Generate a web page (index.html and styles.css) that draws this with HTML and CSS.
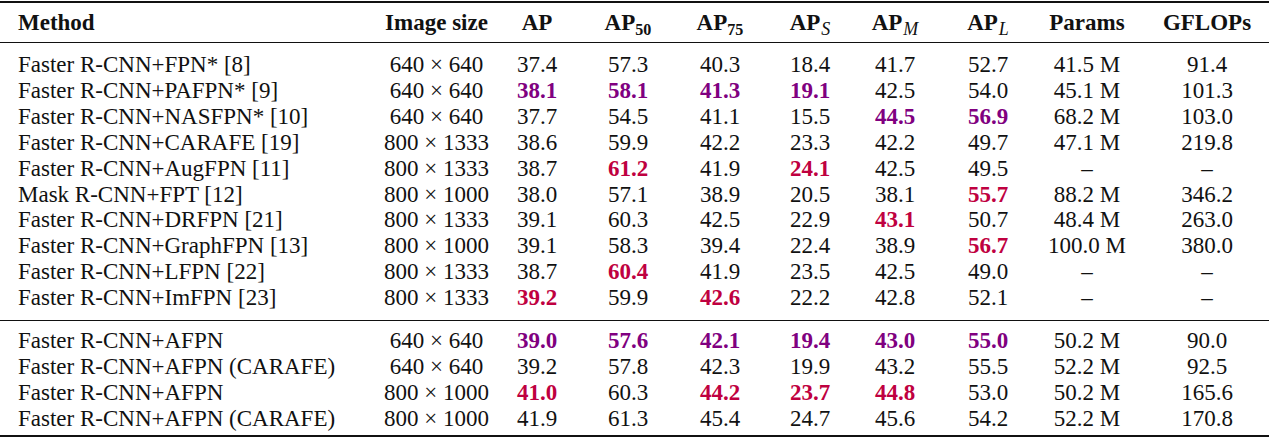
FILE: index.html
```html
<!DOCTYPE html>
<html lang="en">
<head>
<meta charset="utf-8">
<title>Comparison table</title>
<link rel="stylesheet" href="styles.css">
</head>
<body>
<div class="page">
<table class="results">
  <colgroup>
    <col class="c1"><col class="c2"><col class="c3"><col class="c4"><col class="c5">
    <col class="c6"><col class="c7"><col class="c8"><col class="c9"><col class="c10">
  </colgroup>
  <thead>
    <tr>
      <th class="method">Method</th>
      <th class="k2">Image size</th>
      <th class="k3">AP</th>
      <th class="k4">AP<span class="sub">50</span></th>
      <th class="k5">AP<span class="sub">75</span></th>
      <th class="k6">AP<span class="sub it">S</span></th>
      <th class="k7">AP<span class="sub it">M</span></th>
      <th class="k8">AP<span class="sub it">L</span></th>
      <th class="k9">Params</th>
      <th class="k10">GFLOPs</th>
    </tr>
  </thead>
  <tbody class="group-a">
    <tr class="first"><td class="method">Faster R-CNN+FPN* [8]</td><td class="k2">640 × 640</td><td class="k3">37.4</td><td class="k4">57.3</td><td class="k5">40.3</td><td class="k6">18.4</td><td class="k7">41.7</td><td class="k8">52.7</td><td class="k9">41.5 M</td><td class="k10">91.4</td></tr>
    <tr><td class="method">Faster R-CNN+PAFPN* [9]</td><td class="k2">640 × 640</td><td class="k3 pu">38.1</td><td class="k4 pu">58.1</td><td class="k5 pu">41.3</td><td class="k6 pu">19.1</td><td class="k7">42.5</td><td class="k8">54.0</td><td class="k9">45.1 M</td><td class="k10">101.3</td></tr>
    <tr><td class="method">Faster R-CNN+NASFPN* [10]</td><td class="k2">640 × 640</td><td class="k3">37.7</td><td class="k4">54.5</td><td class="k5">41.1</td><td class="k6">15.5</td><td class="k7 pu">44.5</td><td class="k8 pu">56.9</td><td class="k9">68.2 M</td><td class="k10">103.0</td></tr>
    <tr><td class="method">Faster R-CNN+CARAFE [19]</td><td class="k2">800 × 1333</td><td class="k3">38.6</td><td class="k4">59.9</td><td class="k5">42.2</td><td class="k6">23.3</td><td class="k7">42.2</td><td class="k8">49.7</td><td class="k9">47.1 M</td><td class="k10">219.8</td></tr>
    <tr><td class="method">Faster R-CNN+AugFPN [11]</td><td class="k2">800 × 1333</td><td class="k3">38.7</td><td class="k4 rd">61.2</td><td class="k5">41.9</td><td class="k6 rd">24.1</td><td class="k7">42.5</td><td class="k8">49.5</td><td class="k9">–</td><td class="k10">–</td></tr>
    <tr><td class="method">Mask R-CNN+FPT [12]</td><td class="k2">800 × 1000</td><td class="k3">38.0</td><td class="k4">57.1</td><td class="k5">38.9</td><td class="k6">20.5</td><td class="k7">38.1</td><td class="k8 rd">55.7</td><td class="k9">88.2 M</td><td class="k10">346.2</td></tr>
    <tr><td class="method">Faster R-CNN+DRFPN [21]</td><td class="k2">800 × 1333</td><td class="k3">39.1</td><td class="k4">60.3</td><td class="k5">42.5</td><td class="k6">22.9</td><td class="k7 rd">43.1</td><td class="k8">50.7</td><td class="k9">48.4 M</td><td class="k10">263.0</td></tr>
    <tr><td class="method">Faster R-CNN+GraphFPN [13]</td><td class="k2">800 × 1000</td><td class="k3">39.1</td><td class="k4">58.3</td><td class="k5">39.4</td><td class="k6">22.4</td><td class="k7">38.9</td><td class="k8 rd">56.7</td><td class="k9">100.0 M</td><td class="k10">380.0</td></tr>
    <tr><td class="method">Faster R-CNN+LFPN [22]</td><td class="k2">800 × 1333</td><td class="k3">38.7</td><td class="k4 rd">60.4</td><td class="k5">41.9</td><td class="k6">23.5</td><td class="k7">42.5</td><td class="k8">49.0</td><td class="k9">–</td><td class="k10">–</td></tr>
    <tr class="last"><td class="method">Faster R-CNN+ImFPN [23]</td><td class="k2">800 × 1333</td><td class="k3 rd">39.2</td><td class="k4">59.9</td><td class="k5 rd">42.6</td><td class="k6">22.2</td><td class="k7">42.8</td><td class="k8">52.1</td><td class="k9">–</td><td class="k10">–</td></tr>
  </tbody>
  <tbody class="group-b">
    <tr class="first"><td class="method">Faster R-CNN+AFPN</td><td class="k2">640 × 640</td><td class="k3 pu">39.0</td><td class="k4 pu">57.6</td><td class="k5 pu">42.1</td><td class="k6 pu">19.4</td><td class="k7 pu">43.0</td><td class="k8 pu">55.0</td><td class="k9">50.2 M</td><td class="k10">90.0</td></tr>
    <tr><td class="method">Faster R-CNN+AFPN (CARAFE)</td><td class="k2">640 × 640</td><td class="k3">39.2</td><td class="k4">57.8</td><td class="k5">42.3</td><td class="k6">19.9</td><td class="k7">43.2</td><td class="k8">55.5</td><td class="k9">52.2 M</td><td class="k10">92.5</td></tr>
    <tr><td class="method">Faster R-CNN+AFPN</td><td class="k2">800 × 1000</td><td class="k3 rd">41.0</td><td class="k4">60.3</td><td class="k5 rd">44.2</td><td class="k6 rd">23.7</td><td class="k7 rd">44.8</td><td class="k8">53.0</td><td class="k9">50.2 M</td><td class="k10">165.6</td></tr>
    <tr class="last"><td class="method">Faster R-CNN+AFPN (CARAFE)</td><td class="k2">800 × 1000</td><td class="k3">41.9</td><td class="k4">61.3</td><td class="k5">45.4</td><td class="k6">24.7</td><td class="k7">45.6</td><td class="k8">54.2</td><td class="k9">52.2 M</td><td class="k10">170.8</td></tr>
  </tbody>
</table>
</div>
</body>
</html>
```

FILE: styles.css
```css
html, body {
  margin: 0;
  padding: 0;
  background: #ffffff;
}

.page {
  padding-top: 1px;
  width: 1269px;
}

.results {
  width: 1269px;
  table-layout: fixed;
  border-collapse: separate;
  border-spacing: 0;
  font-family: "Liberation Serif", "Times New Roman", serif;
  font-size: 23px;
  color: #111111;
}

.c1 { width: 382px; }
.c2 { width: 109px; }
.c3 { width: 96px; }
.c4 { width: 87px; }
.c5 { width: 91px; }
.c6 { width: 87px; }
.c7 { width: 89px; }
.c8 { width: 96px; }
.c9 { width: 110px; }
.c10 { width: 122px; }

.results th,
.results td {
  padding: 0;
  text-align: center;
  white-space: nowrap;
  vertical-align: middle;
}

.results th {
  font-weight: bold;
  height: 39px;
  line-height: 39px;
  border-top: 2px solid #111111;
  border-bottom: 1px solid #111111;
}

.results td {
  line-height: 25.9px;
  height: 25.9px;
}

.results .method {
  text-align: left;
  padding-left: 18px;
}

.k3 { padding-right: 4px !important; }
.k4 { padding-right: 5px !important; }
.k5 { padding-left: 1px !important; }
.k6 { padding-left: 3px !important; }
.k7 { padding-right: 3px !important; }
.k8 { padding-right: 2px !important; }
.k9 { padding-right: 10px !important; }
.k10 { padding-right: 2px !important; }

.sub {
  font-size: 70%;
  position: relative;
  top: 0.3em;
  line-height: 0;
}

.sub.it {
  font-style: italic;
  font-weight: normal;
  font-size: 78%;
  margin-left: 1px;
}

.pu {
  color: #800080;
  font-weight: bold;
}

.rd {
  color: #bf0040;
  font-weight: bold;
}

.group-a tr.first td { padding-top: 9px; }
.group-a tr.last td {
  padding-bottom: 9px;
  border-bottom: 1px solid #111111;
}

.group-b tr.first td { padding-top: 7px; }
.group-b tr.last td {
  padding-bottom: 3px;
  border-bottom: 2px solid #111111;
}
```
